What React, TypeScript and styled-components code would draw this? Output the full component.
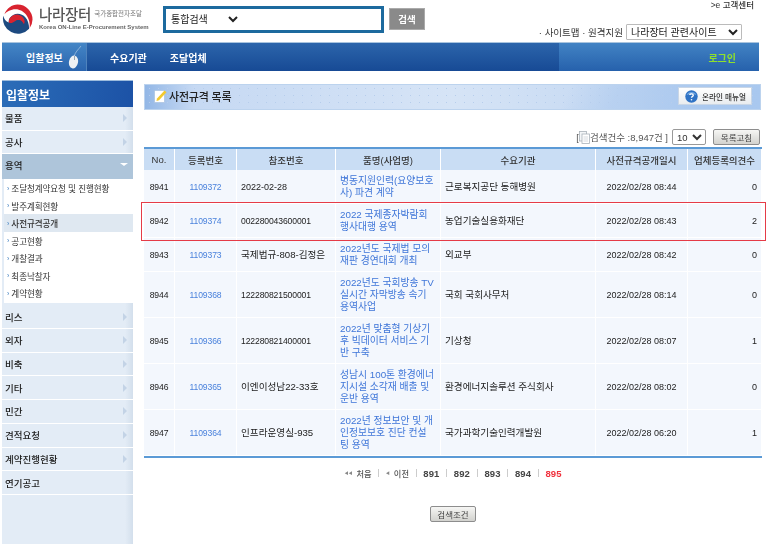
import React from "react";
import styled, { createGlobalStyle } from "styled-components";

const FONT = `"Liberation Sans", "Noto Sans CJK KR", sans-serif`;

const menuTop = ["물품", "공사"];
const menuBottom = ["리스", "외자", "비축", "기타", "민간", "견적요청", "계약진행현황"];
const subMenu = [
  "조달청계약요청 및 진행현황",
  "발주계획현황",
  "사전규격공개",
  "공고현황",
  "개찰결과",
  "최종낙찰자",
  "계약현황",
];

const rows = [
  { no: 8941, reg: "1109372", ref: "2022-02-28", name: "병동지원인력(요양보호\n사) 파견 계약", org: "근로복지공단 동해병원", date: "2022/02/28 08:44", cnt: 0 },
  { no: 8942, reg: "1109374", ref: "002280043600001", name: "2022 국제종자박람회\n행사대행 용역", org: "농업기술실용화재단", date: "2022/02/28 08:43", cnt: 2 },
  { no: 8943, reg: "1109373", ref: "국제법규-808-김정은", name: "2022년도 국제법 모의\n재판 경연대회 개최", org: "외교부", date: "2022/02/28 08:42", cnt: 0 },
  { no: 8944, reg: "1109368", ref: "122280821500001", name: "2022년도 국회방송 TV\n실시간 자막방송 속기\n용역사업", org: "국회 국회사무처", date: "2022/02/28 08:14", cnt: 0 },
  { no: 8945, reg: "1109366", ref: "122280821400001", name: "2022년 맞춤형 기상기\n후 빅데이터 서비스 기\n반 구축", org: "기상청", date: "2022/02/28 08:07", cnt: 1 },
  { no: 8946, reg: "1109365", ref: "이엔이성남22-33호", name: "성남시 100톤 환경에너\n지시설 소각재 배출 및\n운반 용역", org: "환경에너지솔루션 주식회사", date: "2022/02/28 08:02", cnt: 0 },
  { no: 8947, reg: "1109364", ref: "인프라운영실-935", name: "2022년 정보보안 및 개\n인정보보호 진단 컨설\n팅 용역", org: "국가과학기술인력개발원", date: "2022/02/28 06:20", cnt: 1 },
];

const heads = ["No.", "등록번호", "참조번호", "품명(사업명)", "수요기관", "사전규격공개일시", "업체등록의견수"];
const colWidths = [31, 62, 99, 105, 155, 92, 74];
const pages = [891, 892, 893, 894, 895];

const GlobalStyle = createGlobalStyle`
  html, body {
    margin: 0;
    padding: 0;
    background: #fff;
    overflow: hidden;
  }
  body {
    font-family: ${FONT};
    font-size: 9px;
    color: #222;
  }
`;

const Page = styled.div`
  width: 773px;
  height: 544px;
  display: flex;
  flex-direction: column;
  overflow: hidden;
  filter: blur(0.35px);
`;

const Header = styled.header`
  height: 42px;
  display: flex;
  padding-left: 2px;
  width: 757px;
`;

const Logo = styled.div`
  width: 161px;
  display: flex;
  gap: 6px;
  padding-top: 4px;
  box-sizing: border-box;
`;

const LogoText = styled.div`
  display: flex;
  flex-direction: column;
`;

const LogoTop = styled.div`
  display: flex;
  align-items: center;
  gap: 3px;
  height: 18px;
`;

const LogoName = styled.span`
  font-size: 14.5px;
  letter-spacing: -0.3px;
  color: #555;
  font-weight: 500;
`;

const LogoSub = styled.span`
  font-size: 6.5px;
  color: #777;
  white-space: nowrap;
`;

const LogoEng = styled.span`
  font-size: 6px;
  font-weight: 700;
  color: #666;
  white-space: nowrap;
  margin-top: 2px;
`;

const SearchBox = styled.div`
  margin-top: 6px;
  width: 221px;
  height: 27px;
  box-sizing: border-box;
  border: 3px solid #1c6a9e;
  display: flex;
  align-items: center;
`;

const SearchSelect = styled.select`
  width: 74px;
  margin-left: 1px;
  border: none;
  background: #fff;
  font-family: ${FONT};
  font-size: 10px;
  color: #222;
  outline: none;
  padding: 0;
`;

const SearchButton = styled.button`
  margin: 8px 0 0 5px;
  width: 36px;
  height: 22px;
  border: 1px solid #aaa;
  background: #8a8a8a;
  color: #fff;
  font-family: ${FONT};
  font-weight: 700;
  font-size: 9.5px;
  padding: 0;
`;

const Util = styled.div`
  margin-left: auto;
  display: flex;
  flex-direction: column;
  align-items: flex-end;
`;

const Customer = styled.a`
  height: 24px;
  padding-right: 5px;
  font-size: 8.5px;
  font-weight: 500;
  color: #333;
  line-height: 10px;
`;

const UtilRow = styled.div`
  display: flex;
  align-items: center;
  gap: 3px;
  margin-right: 17px;
  font-size: 9.5px;
  color: #333;
`;

const SiteSelect = styled.select`
  width: 116px;
  height: 16px;
  border: 1px solid #bbb;
  border-radius: 1px;
  background: #fff;
  font-family: ${FONT};
  font-size: 10px;
  color: #222;
  padding: 0;
`;

const Nav = styled.nav`
  margin-left: 2px;
  width: 757px;
  height: 29px;
  display: flex;
  align-items: stretch;
  box-sizing: border-box;
  border-top: 1px solid #a9c4de;
  background:
    linear-gradient(115deg, transparent 0 78%, rgba(255, 255, 255, 0.05) 78% 82%, transparent 82%),
    linear-gradient(#2c65ab, #174a95);
`;

const NavActive = styled.a`
  width: 85px;
  display: flex;
  align-items: center;
  gap: 5px;
  padding-left: 24px;
  box-sizing: border-box;
  background: linear-gradient(#4486c6, #2a64ae);
  border-right: 1px solid #4f83bd;
  color: #fff;
  font-weight: 700;
  font-size: 10px;
`;

const NavItem = styled.a`
  display: flex;
  align-items: center;
  margin-left: ${(p: { $gap: number }) => p.$gap}px;
  color: #fff;
  font-weight: 700;
  font-size: 10px;
`;

const NavLogin = styled.a`
  margin-left: auto;
  width: 200px;
  padding-right: 23px;
  box-sizing: border-box;
  display: flex;
  align-items: center;
  justify-content: flex-end;
  background: linear-gradient(#4283c4, #2661ac);
  color: #8fe02c;
  font-weight: 700;
  font-size: 10px;
`;

const Body = styled.div`
  flex: 1;
  display: flex;
  padding-top: 9px;
  min-height: 0;
`;

const Side = styled.aside`
  margin-left: 2px;
  width: 131px;
  background: linear-gradient(to right, #e3ecf6 94%, #d3dfec);
  display: flex;
  flex-direction: column;
`;

const SideTitle = styled.h2`
  margin: 0;
  height: 27px;
  padding-left: 4px;
  display: flex;
  align-items: center;
  background: linear-gradient(100deg, #2b6db8, #1c52a6);
  border-top: 1px solid #9cbbdc;
  box-sizing: border-box;
  color: #fff;
  font-size: 12px;
  font-weight: 700;
`;

const MenuItem = styled.a<{ $open?: boolean }>`
  height: ${(p) => (p.$open ? 25 : 23.7)}px;
  flex: none;
  box-sizing: border-box;
  padding: 0 6px ${(p) => (p.$open ? 4 : 0)}px 3px;
  display: flex;
  align-items: center;
  justify-content: space-between;
  border-bottom: ${(p) => (p.$open ? "none" : "1px solid #fff")};
  background: ${(p) => (p.$open ? "#aec5da" : "transparent")};
  color: #222;
  font-size: 9.5px;
  font-weight: 500;
`;

const ArrowRight = styled.i`
  width: 0;
  height: 0;
  border-left: 4px solid #c3d3e6;
  border-top: 4px solid transparent;
  border-bottom: 4px solid transparent;
`;

const ArrowDown = styled.i`
  width: 0;
  height: 0;
  margin-right: -1px;
  border-top: 3px solid #fff;
  border-left: 4px solid transparent;
  border-right: 4px solid transparent;
`;

const SubMenu = styled.ul`
  list-style: none;
  margin: 0 0 2px;
  padding: 0 0 1.5px;
  background: #fff;
  border-left: 2px solid #e3ecf6;
  flex: none;
`;

const SubItem = styled.li<{ $on?: boolean }>`
  height: 17.5px;
  display: flex;
  align-items: center;
  gap: 2px;
  padding-left: 3px;
  background: ${(p) => (p.$on ? "#dfe8f1" : "transparent")};
  font-size: 8.6px;
  font-weight: ${(p) => (p.$on ? 500 : 400)};
  letter-spacing: -0.12px;
  color: #333;
  white-space: nowrap;
`;

const SubMark = styled.span`
  color: #3f7fc0;
  font-size: 7px;
  letter-spacing: 0;
`;

const Main = styled.main`
  margin-left: 11px;
  width: 618px;
  padding-top: 3.5px;
  display: flex;
  flex-direction: column;
`;

const TitleBar = styled.div`
  height: 26px;
  width: 617px;
  box-sizing: border-box;
  border: 1px solid #bcd3ee;
  padding: 0 8px 1px 9px;
  display: flex;
  align-items: center;
  gap: 2px;
  background:
    radial-gradient(circle, #b6cdec 0.6px, transparent 0.8px) 0 0 / 9px 7px,
    linear-gradient(115deg, transparent 0 68%, rgba(170, 200, 238, 0.5) 76%, #a9c8ef 100%),
    linear-gradient(to right, #93b7e6, #c6d9f3 8%, #d6e4f6 50%, #c4d8f2 80%, #a4c3ec);
`;

const Title = styled.h1`
  margin: 0;
  font-size: 11px;
  font-weight: 500;
  color: #222;
  letter-spacing: -0.2px;
`;

const ManualButton = styled.a`
  margin-left: auto;
  width: 74px;
  height: 18px;
  box-sizing: border-box;
  display: flex;
  align-items: center;
  gap: 4px;
  padding-left: 6px;
  background: linear-gradient(#fff, #e9ecef);
  border: 1px solid #c9d6e6;
  font-size: 7.6px;
  font-weight: 500;
  color: #333;
  white-space: nowrap;
`;

const ToolRow = styled.div`
  margin-top: 19.5px;
  height: 18px;
  width: 616px;
  display: flex;
  align-items: flex-start;
  justify-content: flex-end;
`;

const Count = styled.span`
  display: flex;
  align-items: center;
  height: 16px;
  margin-right: 4px;
  font-size: 9.5px;
  color: #555;
  white-space: nowrap;
`;

const PageSize = styled.select`
  width: 34px;
  height: 16px;
  margin-right: 7px;
  border: 1px solid #999;
  border-radius: 2px;
  background: #fff;
  font-family: ${FONT};
  font-size: 9.5px;
  color: #333;
  padding: 0;
`;

const GrayButton = styled.button`
  height: 16px;
  width: ${(p: { $w: number }) => p.$w}px;
  padding: 0;
  border: 1px solid #8d8d8d;
  border-radius: 2px;
  background: linear-gradient(#f6f6f4, #d2d2ce);
  font-family: ${FONT};
  font-size: 8.5px;
  color: #444;
`;

const TableWrap = styled.div`
  position: relative;
  width: 618px;
`;

const Table = styled.table`
  width: 618px;
  table-layout: fixed;
  border-collapse: separate;
  border-spacing: 0;
  border-top: 2px solid #5b9ad6;
  border-bottom: 2px solid #5b9ad6;
`;

const Th = styled.th`
  height: 21px;
  padding: 0;
  background: #c9ddf4;
  border-right: 1px solid #fff;
  font-size: 9.5px;
  font-weight: 500;
  color: #333;
`;

const Td = styled.td<{ $align?: string }>`
  padding: 5px 4px 4px;
  background: #f3f7fd;
  border-right: 1px solid #fff;
  border-bottom: 1px solid #fff;
  text-align: ${(p) => p.$align || "left"};
  font-size: 9.6px;
  line-height: 12px;
  color: #222;
  white-space: nowrap;
  overflow: hidden;
  box-sizing: border-box;
`;

const RegLink = styled.a`
  color: #4a82dc;
  font-size: 8.6px;
  letter-spacing: -0.12px;
`;

const Digits = styled.span`
  font-size: 8.6px;
  letter-spacing: -0.12px;
`;

const Plain = styled.span`
  font-size: 9px;
`;

const NameLink = styled.a`
  display: block;
  color: #3f76d8;
  white-space: pre-line;
  font-size: 9.8px;
`;

const RowMark = styled.div`
  position: absolute;
  left: -3px;
  top: 55px;
  width: 625px;
  height: 39px;
  box-sizing: border-box;
  border: 1.5px solid #e53b47;
  pointer-events: none;
`;

const Pager = styled.div`
  margin-top: 8px;
  height: 14px;
  display: flex;
  align-items: center;
  justify-content: center;
  color: #555;
`;

const PageLink = styled.a<{ $now?: boolean }>`
  font-weight: 700;
  font-size: 9.5px;
  letter-spacing: 0.1px;
  color: ${(p) => (p.$now ? "#f0303c" : "#444")};
`;

const PageSep = styled.i`
  width: 1px;
  height: 8px;
  margin: 0 6.7px;
  background: #ccc;
`;

const PageTag = styled.span`
  font-size: 8.2px;
  font-weight: 500;
  color: #555;
`;

const PageArrow = styled.span`
  font-size: 4px;
  color: #888;
  margin-right: 4px;
`;

const Center = styled.div`
  margin-top: 26px;
  display: flex;
  justify-content: center;
`;

const TaegeukLogo = () => (
  <svg width="31" height="31" viewBox="0 0 32 32">
    <circle cx="16" cy="16" r="15.500" fill="#fff" />
    <path d="M16 .500A15.500 15.500 0 0 1 31.500 16 15.500 15.500 0 0 1 28.500 25C30 15 23 5.500 14 5.500 9 5.500 5 8 2.500 10.500 5 4.500 10 .500 16 .500Z" fill="#d8232f" />
    <path d="M1.300 12A15.500 15.500 0 0 0 28 25.500C28 13 19 8 12 11 8 13 6.500 16 7 19 4 18 2 15.500 1.300 12Z" fill="#1d4a80" />
    <path d="M7 19C7 13 13 9.500 18.500 11.500 23 13.500 24.500 18 22.500 21 20.500 16.500 17 15.500 14 17.500 12 19 9 21 7 19Z" fill="#d8232f" />
    <path d="M22.500 21C20.500 16.500 17 15.500 14 17.500 12 19 9 21 7 19 9 24 16 25 20.500 22.500Z" fill="#1d4a80" />
  </svg>
);

const MouseIcon = () => (
  <svg width="14" height="25" viewBox="0 0 14 25">
    <path d="M6 12C7 7 10 5 13 1" stroke="#9fc0e0" strokeWidth="0.8" fill="none" />
    <ellipse cx="5.500" cy="17" rx="4.500" ry="6.500" fill="#eef1f4" transform="rotate(12 5.500 17)" />
    <path d="M6.500 11V15" stroke="#9aa8b5" strokeWidth="1" />
  </svg>
);

const EditIcon = () => (
  <svg width="13" height="14" viewBox="0 0 13 14">
    <rect x="0.500" y="1.500" width="10" height="12" fill="#fff" stroke="#a8c0de" strokeWidth="0.7" />
    <path d="M3 9.500 10.500 1.500 12.500 3.300 5 11.200 2.500 12Z" fill="#f2c92f" />
  </svg>
);

const HelpIcon = () => (
  <svg width="13" height="13" viewBox="0 0 13 13">
    <circle cx="6.500" cy="6.500" r="6.200" fill="#2f72c4" />
    <path d="M1.500 5A5.500 5 0 0 1 11.500 5C8 3.500 5 3.500 1.500 5Z" fill="#6fa5e0" />
    <path d="M4.800 5C4.800 3.500 8.300 3.500 8.300 5.200 8.300 6.500 6.500 6.300 6.500 7.800" stroke="#fff" strokeWidth="1.300" fill="none" />
    <circle cx="6.500" cy="9.800" r="0.800" fill="#fff" />
  </svg>
);

const DocIcon = () => (
  <svg width="11" height="13" viewBox="0 0 11 13">
    <rect x="0.500" y="0.500" width="7" height="9.500" fill="#f4f6f8" stroke="#aab2ba" strokeWidth="0.8" />
    <rect x="3" y="3" width="7.500" height="9.500" fill="#fff" stroke="#aab2ba" strokeWidth="0.8" />
    <path d="M4.500 6H9M4.500 8H9M4.500 10H9" stroke="#c6ccd2" strokeWidth="0.7" />
  </svg>
);

const refCell = (v: string) => {
  if (/^\d+$/.test(v)) return <Digits>{v}</Digits>;
  if (/^[\d-]+$/.test(v)) return <Plain>{v}</Plain>;
  return v;
};

export default function App() {
  return (
    <Page>
      <GlobalStyle />
      <Header>
        <Logo>
          <TaegeukLogo />
          <LogoText>
            <LogoTop>
              <LogoName>나라장터</LogoName>
              <LogoSub>국가종합전자조달</LogoSub>
            </LogoTop>
            <LogoEng>Korea ON-Line E-Procurement System</LogoEng>
          </LogoText>
        </Logo>
        <SearchBox>
          <SearchSelect defaultValue="통합검색">
            <option>통합검색</option>
          </SearchSelect>
        </SearchBox>
        <SearchButton>검색</SearchButton>
        <Util>
          <Customer>&gt;e 고객센터</Customer>
          <UtilRow>
            <span>· 사이트맵 · 원격지원</span>
            <SiteSelect defaultValue="나라장터 관련사이트">
              <option>나라장터 관련사이트</option>
            </SiteSelect>
          </UtilRow>
        </Util>
      </Header>

      <Nav>
        <NavActive>
          입찰정보 <MouseIcon />
        </NavActive>
        <NavItem $gap={23}>수요기관</NavItem>
        <NavItem $gap={23}>조달업체</NavItem>
        <NavLogin>로그인</NavLogin>
      </Nav>

      <Body>
        <Side>
          <SideTitle>입찰정보</SideTitle>
          {menuTop.map((m) => (
            <MenuItem key={m}>
              {m}
              <ArrowRight />
            </MenuItem>
          ))}
          <MenuItem $open>
            용역
            <ArrowDown />
          </MenuItem>
          <SubMenu>
            {subMenu.map((s) => (
              <SubItem key={s} $on={s === "사전규격공개"}>
                <SubMark>›</SubMark>
                {s}
              </SubItem>
            ))}
          </SubMenu>
          {menuBottom.map((m) => (
            <MenuItem key={m}>
              {m}
              <ArrowRight />
            </MenuItem>
          ))}
          <MenuItem>연기공고</MenuItem>
        </Side>

        <Main>
          <TitleBar>
            <EditIcon />
            <Title>사전규격 목록</Title>
            <ManualButton>
              <HelpIcon />
              온라인 매뉴얼
            </ManualButton>
          </TitleBar>

          <ToolRow>
            <Count>
              [<DocIcon />
              검색건수 :8,947건 ]
            </Count>
            <PageSize defaultValue="10">
              <option>10</option>
            </PageSize>
            <GrayButton $w={47}>목록고침</GrayButton>
          </ToolRow>

          <TableWrap>
            <Table>
              <colgroup>
                {colWidths.map((w, i) => (
                  <col key={i} style={{ width: w }} />
                ))}
              </colgroup>
              <thead>
                <tr>
                  {heads.map((h) => (
                    <Th key={h}>{h}</Th>
                  ))}
                </tr>
              </thead>
              <tbody>
                {rows.map((r) => (
                  <tr key={r.no}>
                    <Td $align="center">
                      <Digits>{r.no}</Digits>
                    </Td>
                    <Td $align="center">
                      <RegLink>{r.reg}</RegLink>
                    </Td>
                    <Td>{refCell(r.ref)}</Td>
                    <Td>
                      <NameLink>{r.name}</NameLink>
                    </Td>
                    <Td>{r.org}</Td>
                    <Td $align="center">
                      <Plain>{r.date}</Plain>
                    </Td>
                    <Td $align="right">
                      <Plain>{r.cnt}</Plain>
                    </Td>
                  </tr>
                ))}
              </tbody>
            </Table>
            <RowMark />
          </TableWrap>

          <Pager>
            <PageArrow>◀◀</PageArrow>
            <PageTag>처음</PageTag>
            <PageSep />
            <PageArrow>◀</PageArrow>
            <PageTag>이전</PageTag>
            <PageSep />
            {pages.map((n, i) => (
              <React.Fragment key={n}>
                <PageLink $now={n === 895}>{n}</PageLink>
                {i < pages.length - 1 && <PageSep />}
              </React.Fragment>
            ))}
          </Pager>

          <Center>
            <GrayButton $w={46}>검색조건</GrayButton>
          </Center>
        </Main>
      </Body>
    </Page>
  );
}
